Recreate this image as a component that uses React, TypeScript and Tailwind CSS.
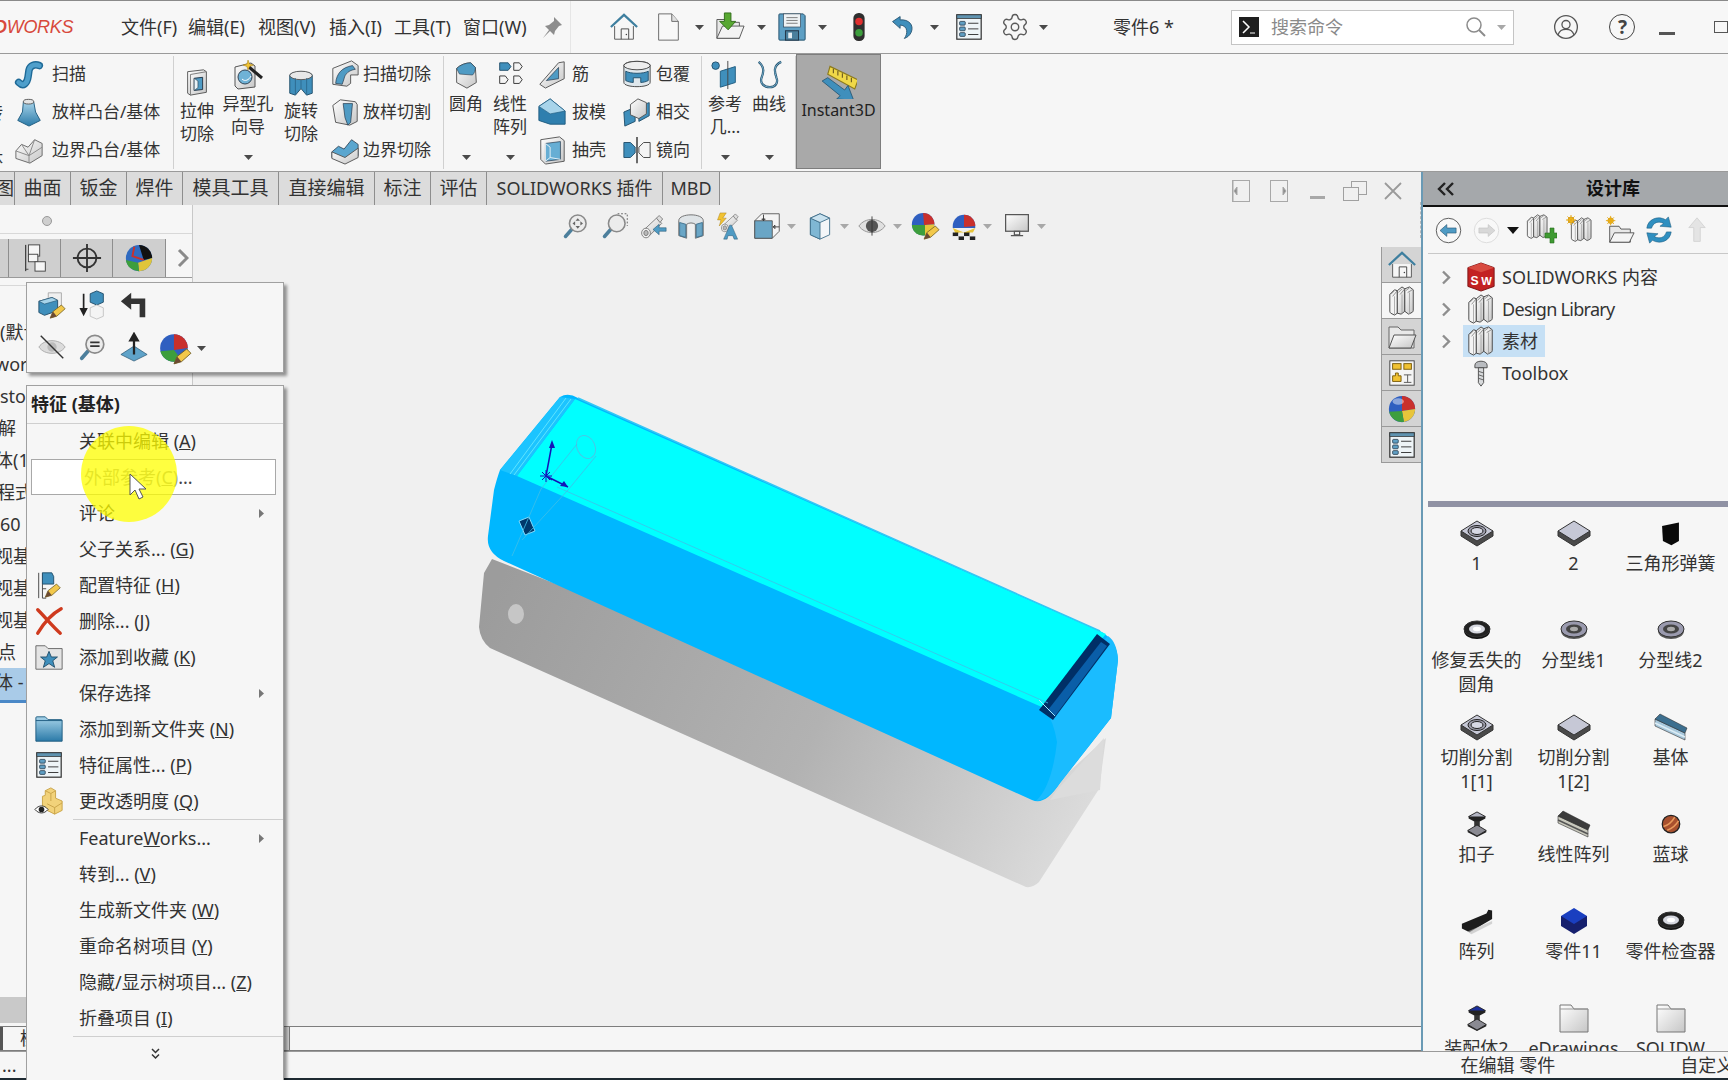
import type { ReactNode } from "react";
import { Settings } from "lucide-react";

type IconProps = { size?: number; children?: ReactNode; box?: string };

const Svg = ({ size = 30, box = "0 0 32 32", children }: IconProps) => (
  <svg width={size} height={size} viewBox={box} className="shrink-0" fill="none">
    {children}
  </svg>
);

const Caret = ({ light = false }: { light?: boolean }) => (
  <svg width="9" height="5" viewBox="0 0 9 5" className="shrink-0">
    <path d="M0 0h9L4.500 5z" fill={light ? "#a8a8a8" : "#4a4a4a"} />
  </svg>
);

const Books = ({ size = 28 }: { size?: number }) => (
  <Svg size={size}>
    <path d="M3 9l5-5 3 1v24l-3 2-4-2q-1-1-1-2z" fill="#f4f4f4" stroke="#444" />
    <path d="M11 5l5-4 3 2v24l-4 3-4-1z" fill="url(#gGray)" stroke="#444" />
    <path d="M19 3l5-2 4 3v22q0 1-1 2l-4 2-4-3z" fill="url(#gGray)" stroke="#444" />
    <path d="M4 9l4-4M6 11l5-6M12 7l4-4M14 9l5-6M20 5l4-3M22 7l5-3" stroke="#777" strokeWidth=".8" />
    <path d="M8 11v20M16 9v21M24 7v23" stroke="#999" strokeWidth=".8" />
  </Svg>
);

const Folder = ({ size = 30, open = false }: { size?: number; open?: boolean }) => (
  <Svg size={size}>
    <path d="M3 27V6h9l3 3h13v18z" fill="#e8e8e8" stroke="#666" />
    {open ? <path d="M3 27l5-13h22l-5 13z" fill="url(#gGray)" stroke="#555" /> : null}
  </Svg>
);

const Sun = ({ x, y }: { x: number; y: number }) => (
  <g>
    <circle cx={x} cy={y} r="3" fill="#f6c11c" stroke="#b07d10" strokeWidth=".6" />
    <path d={`M${x - 5} ${y}h10M${x} ${y - 5}v10M${x - 3.500} ${y - 3.500}l7 7M${x + 3.500} ${y - 3.500}l-7 7`} stroke="#e8a915" />
  </g>
);

const Magnifier = ({ children }: { children?: ReactNode }) => (
  <>
    <path d="M11 20L4 28" stroke="#4c7f9c" strokeWidth="4" strokeLinecap="round" />
    <circle cx="18" cy="13" r="9.500" fill="#ececec" stroke="#8a8a8a" strokeWidth="1.800" />
    {children}
  </>
);

const Spyglass = () => (
  <>
    <path d="M5 21L20 7l6 6-14 14z" fill="url(#gGray)" stroke="#777" />
    <ellipse cx="8" cy="24" rx="5" ry="5.500" fill="#f0f0f0" stroke="#777" />
    <ellipse cx="8" cy="24" rx="2.500" ry="3" fill="#b8b8b8" stroke="#777" />
    <path d="M20 7l3-3 4 4-3 4z" fill="#ddd" stroke="#777" />
  </>
);

const Ball = ({ size = 30 }: { size?: number }) => (
  <Svg size={size}>
    <circle cx="16" cy="16" r="14" fill="#2f5fc0" />
    <path d="M16 2a14 14 0 0 1 14 14L16 18z" fill="#c9302c" />
    <path d="M30 16a14 14 0 0 1-12 13.800L16 18z" fill="#e8c53a" />
    <path d="M18 29.800A14 14 0 0 1 2.300 19L16 18z" fill="#3d9e3d" />
    <ellipse cx="12" cy="8" rx="6" ry="3.500" fill="#fff" opacity=".45" />
  </Svg>
);

const Pencil = ({ x = 0, y = 0 }: { x?: number; y?: number }) => (
  <g transform={`translate(${x} ${y})`}>
    <path d="M0 14l3-7L12 0l4 4-9 8z" fill="#f2c84b" stroke="#6b5a20" strokeWidth=".8" />
    <path d="M0 14l3-7 4 5z" fill="#6b4a33" />
  </g>
);

const ListIcon = ({ size = 30 }: { size?: number }) => (
  <Svg size={size}>
    <rect x="3" y="3" width="26" height="26" fill="#eef4f7" stroke="#333" strokeWidth="1.300" />
    <rect x="3" y="3" width="26" height="4" fill="#5f93b0" stroke="#333" strokeWidth=".8" />
    <rect x="6" y="10" width="6" height="4" rx="1" fill="#5f9fc4" stroke="#234" strokeWidth=".8" />
    <rect x="6" y="16" width="6" height="4" rx="1" fill="#5f9fc4" stroke="#234" strokeWidth=".8" />
    <rect x="6" y="22" width="6" height="4" rx="1" fill="#5f9fc4" stroke="#234" strokeWidth=".8" />
    <path d="M15 12h11M15 18h11M15 24h11" stroke="#333" />
  </Svg>
);

const Home = ({ size = 30 }: { size?: number }) => (
  <Svg size={size}>
    <path d="M2 16L16 3l14 13" stroke="#3e7f9f" strokeWidth="2.400" />
    <path d="M6 15v14h20V15" fill="#f6f6f6" stroke="#555" />
    <path d="M13 29V18h8v11" stroke="#444" />
    <circle cx="18.500" cy="24" r=".8" fill="#444" />
  </Svg>
);

const SweepBoss = () => (
  <Svg>
    <path d="M5 25c5 5 9 1 10-6l1-7c1-5 6-7 11-5" stroke="#1f6a97" strokeWidth="8" strokeLinecap="round" />
    <path d="M5 25c5 5 9 1 10-6l1-7c1-5 6-7 11-5" stroke="#4f9fcb" strokeWidth="5" strokeLinecap="round" />
  </Svg>
);
const LoftBoss = () => (
  <Svg>
    <path d="M10 5h11l2 11 5 9-12 6-12-6 5-9z" fill="url(#gBlue)" stroke="#1f5c80" />
    <ellipse cx="15.500" cy="5" rx="5.500" ry="2.500" fill="#e4e4e4" stroke="#555" />
  </Svg>
);
const BoundaryBoss = () => (
  <Svg>
    <path d="M2 17l6-7 7 3 7-8 8 4v13l-13 8-15-5z" fill="url(#gGray)" stroke="#666" />
    <path d="M2 17l14 5 14-9M16 22v8M8 10l8 12M22 5l-6 17" stroke="#888" />
  </Svg>
);
const CutExtrude = () => (
  <Svg>
    <path d="M6 5l17-2 3 2v22l-17 3-3-2z" fill="url(#gGray)" stroke="#555" />
    <path d="M9 8l17-3M9 8v22" stroke="#777" />
    <path d="M13 12l9-1v13l-9 1z" fill="#4f9bc4" stroke="#234" />
    <path d="M13 12l4 3v7l-4 3z" fill="#e8f2f7" stroke="#234" strokeWidth=".6" />
  </Svg>
);
const HoleWizard = () => (
  <Svg size={32}>
    <path d="M3 8l16-4 4 3v21l-17 2-3-3z" fill="url(#gGray)" stroke="#555" />
    <circle cx="13" cy="18" r="7" fill="#6fb2d6" stroke="#345" />
    <path d="M10 20c3 3 7 1 9-3" stroke="#fff" />
    <path d="M17 8l13 11" stroke="#222" strokeWidth="3" />
    <path d="M16 1l1.500 4 4 1-4 1.500L16 11l-1-3.500-4-1.500 4-1z" fill="#f1c232" stroke="#a57d10" strokeWidth=".5" />
  </Svg>
);
const RevolveCut = () => (
  <Svg>
    <path d="M4 9c0-5 24-5 24 0v19l-6 2-6-7-6 7-6-2z" fill="#3f8fbc" stroke="#23506c" />
    <ellipse cx="16" cy="9" rx="12" ry="4.500" fill="#e8e8e8" stroke="#555" />
    <path d="M10 12v17M16 14v9M22 12v17" stroke="#2d6b90" />
  </Svg>
);
const SweepCut = () => (
  <Svg>
    <path d="M3 10l20-8 7 5v10h-8v9l-4 3-15-2z" fill="url(#gGray)" stroke="#555" />
    <path d="M6 26C7 15 13 9 24 7l3 4c-7 1-11 5-12 10l-2 6z" fill="#4f9bc4" stroke="#234" strokeWidth=".7" />
  </Svg>
);
const LoftCut = () => (
  <Svg>
    <path d="M3 9l8-6 16 2 2 3v18l-8 4-15-3z" fill="url(#gGray)" stroke="#555" />
    <path d="M14 7h10l-2 20-3 3-3-8z" fill="#4f9bc4" stroke="#234" strokeWidth=".7" />
  </Svg>
);
const BoundaryCut = () => (
  <Svg>
    <path d="M2 18l7-6 6 3 8-10 7 5v12l-14 8-14-6z" fill="#5aa6cf" stroke="#234" strokeWidth=".8" />
    <path d="M2 18l14 6 14-10v10l-14 7-14-6z" fill="url(#gGray)" stroke="#555" />
  </Svg>
);
const Fillet = () => (
  <Svg>
    <path d="M6 9c4-4 10-6 15-6l5 5 1 16-10 6-11-6z" fill="url(#gGray)" stroke="#555" />
    <path d="M6 9c4-4 10-6 15-6l5 5c0 3-1 6-3 8L9 15z" fill="#4f9bc4" stroke="#234" strokeWidth=".6" />
  </Svg>
);
const LinearPat = () => (
  <Svg>
    <path d="M5 3h9l3 4-3 4H5z" fill="#3f8fbc" stroke="#23506c" />
    <path d="M20 3h6l3 4-3 4h-6zM5 17h6l3 4-3 4H5zM20 17h6l3 4-3 4h-6z" fill="#f4f4f4" stroke="#333" />
  </Svg>
);
const Rib = () => (
  <Svg>
    <path d="M3 27L23 4l6-1v18L9 31z" fill="url(#gGray)" stroke="#555" />
    <path d="M10 23L23 9v12z" fill="#4f9bc4" stroke="#234" strokeWidth=".7" />
  </Svg>
);
const Draft = () => (
  <Svg>
    <path d="M2 10l12-8 16 13v14H14l-12-4z" fill="#2f7fae" stroke="#1f5c80" />
    <path d="M2 10l12-8 16 13-16 3z" fill="#a8d4ea" stroke="#1f5c80" strokeWidth=".7" />
  </Svg>
);
const Shell = () => (
  <Svg>
    <path d="M4 5l20-3 5 4v22l-20 3-5-5z" fill="url(#gGray)" stroke="#555" />
    <path d="M9 9l16-2v19l-16 2z" fill="#66aed4" stroke="#234" strokeWidth=".7" />
    <path d="M9 9l5 4v11l-5 4zM14 24l11 2" stroke="#e8f2f7" />
  </Svg>
);
const Wrap = () => (
  <Svg>
    <path d="M2 7c0-6 28-6 28 0v18c0 6-28 6-28 0z" fill="#dfe7ec" stroke="#444" />
    <ellipse cx="16" cy="7" rx="14" ry="4.500" fill="#eee" stroke="#444" />
    <path d="M4 13c5 3 19 3 24 0v10c-2 1-5 2-8 2v-5h-8v5c-3 0-6-1-8-2z" fill="#3f8fbc" stroke="#23506c" />
  </Svg>
);
const Intersect = () => (
  <Svg>
    <path d="M2 16l12-5v15L3 31z" fill="#3f8fbc" stroke="#23506c" />
    <path d="M18 10l11-4v14l-11 6z" fill="#3f8fbc" stroke="#23506c" />
    <path d="M9 8l8-6 9 4v12l-8 5-9-4z" fill="url(#gGray)" stroke="#555" />
  </Svg>
);
const Mirror = () => (
  <Svg>
    <path d="M2 8h7l5 5v6l-5 5H2z" fill="#3f8fbc" stroke="#23506c" />
    <path d="M30 8h-7l-5 5v6l5 5h7z" fill="#f4f4f4" stroke="#444" />
    <path d="M16 2v28" stroke="#222" strokeWidth="1.400" />
  </Svg>
);
const RefGeom = () => (
  <Svg>
    <circle cx="6" cy="6" r="4" fill="#3f8fbc" stroke="#23506c" />
    <path d="M11 12l16-5v17l-16 5z" fill="#3f8fbc" stroke="#1f5c80" />
    <path d="M19 1v30" stroke="#444" />
  </Svg>
);
const Curves = () => (
  <Svg>
    <path d="M5 2c7 6 5 12 3 17-2 6 3 10 9 10s9-5 7-10c-2-6-4-13 5-17" stroke="#23506c" strokeWidth="2.400" />
    <path d="M5 2c7 6 5 12 3 17-2 6 3 10 9 10s9-5 7-10c-2-6-4-13 5-17" stroke="#7fb7d4" strokeWidth="1" />
  </Svg>
);
const Instant3D = () => (
  <Svg size={36}>
    <path d="M8 3l25 12-3 8L6 10z" fill="#f0d848" stroke="#8c7a1e" />
    <path d="M11 5v4M15 7v4M19 9v4M23 11v4M27 13v4" stroke="#6b5a20" />
    <path d="M1 16l5-3 15 11 3-4 5 13-15-1 3-3z" fill="#3f8fbc" stroke="#23506c" strokeWidth=".7" />
  </Svg>
);

const RibbonRow = ({ icon, label, iconW }: { icon: ReactNode; label: string; iconW: string }) => (
  <div className="flex h-[38px] items-center">
    <div className={`flex justify-center ${iconW}`}>{icon}</div>
    <span className="whitespace-nowrap">{label}</span>
  </div>
);

const BigBtn = ({
  icon,
  lines,
  width,
  top,
  caret = true,
}: {
  icon: ReactNode;
  lines: string[];
  width: string;
  top: string;
  caret?: boolean;
}) => (
  <div className={`flex flex-col items-center ${width} ${top}`}>
    <div className="flex h-[34px] items-center justify-center">{icon}</div>
    {lines.map((l) => (
      <div key={l} className="whitespace-nowrap text-center leading-[23px]">
        {l}
      </div>
    ))}
    {caret ? (
      <div className="mt-auto pb-[11px]">
        <Caret />
      </div>
    ) : null}
  </div>
);

const RibbonSep = () => <div className="my-[2px] w-px shrink-0 bg-[#d0d0d0]" />;

const Ribbon = () => (
  <div className="flex h-[118px] shrink-0 border-b border-[#9a9a9a] bg-[#f6f6f6] text-[17px]">
    <div className="flex w-[6px] shrink-0 flex-col overflow-hidden pt-[47px] leading-[23px]">
      <div className="ml-[-14px]">转</div>
      <div className="ml-[-7px]">/</div>
      <div className="ml-[-14px]">体</div>
    </div>
    <div className="w-[167px] shrink-0 pt-px">
      <RibbonRow icon={<SweepBoss />} label="扫描" iconW="w-[46px]" />
      <RibbonRow icon={<LoftBoss />} label="放样凸台/基体" iconW="w-[46px]" />
      <RibbonRow icon={<BoundaryBoss />} label="边界凸台/基体" iconW="w-[46px]" />
    </div>
    <RibbonSep />
    <BigBtn icon={<CutExtrude />} lines={["拉伸", "切除"]} width="w-[46px]" top="pt-[11px]" caret={false} />
    <BigBtn icon={<HoleWizard />} lines={["异型孔", "向导"]} width="w-[56px]" top="pt-[4px]" />
    <BigBtn icon={<RevolveCut />} lines={["旋转", "切除"]} width="w-[50px]" top="pt-[11px]" caret={false} />
    <div className="w-[117px] shrink-0 pt-px">
      <RibbonRow icon={<SweepCut />} label="扫描切除" iconW="w-[37px]" />
      <RibbonRow icon={<LoftCut />} label="放样切割" iconW="w-[37px]" />
      <RibbonRow icon={<BoundaryCut />} label="边界切除" iconW="w-[37px]" />
    </div>
    <RibbonSep />
    <BigBtn icon={<Fillet />} lines={["圆角"]} width="w-[44px]" top="pt-[4px]" />
    <BigBtn icon={<LinearPat />} lines={["线性", "阵列"]} width="w-[44px]" top="pt-[4px]" />
    <div className="w-[85px] shrink-0 pt-px">
      <RibbonRow icon={<Rib />} label="筋" iconW="w-[40px]" />
      <RibbonRow icon={<Draft />} label="拔模" iconW="w-[40px]" />
      <RibbonRow icon={<Shell />} label="抽壳" iconW="w-[40px]" />
    </div>
    <div className="w-[84px] shrink-0 pt-px">
      <RibbonRow icon={<Wrap />} label="包覆" iconW="w-[39px]" />
      <RibbonRow icon={<Intersect />} label="相交" iconW="w-[39px]" />
      <RibbonRow icon={<Mirror />} label="镜向" iconW="w-[39px]" />
    </div>
    <RibbonSep />
    <BigBtn icon={<RefGeom />} lines={["参考", "几..."]} width="w-[46px]" top="pt-[4px]" />
    <BigBtn icon={<Curves />} lines={["曲线"]} width="w-[42px]" top="pt-[4px]" />
    <div className="ml-[5px] my-[2px] w-px bg-[#d0d0d0]" />
    <div className="mb-[2px] flex w-[85px] shrink-0 flex-col items-center border border-[#7d7d7d] bg-[#a9a9a9] pt-[8px] text-[#222]">
      <Instant3D />
      <div className="mt-[-1px] text-[16px] leading-[24px]">Instant3D</div>
    </div>
  </div>
);

const menus = [
  { t: "文件(F)", w: "w-[67px]" },
  { t: "编辑(E)", w: "w-[70px]" },
  { t: "视图(V)", w: "w-[71px]" },
  { t: "插入(I)", w: "w-[65px]" },
  { t: "工具(T)", w: "w-[69px]" },
  { t: "窗口(W)", w: "w-[70px]" },
];

const TitleBar = () => (
  <div className="flex h-[53px] shrink-0 items-center border-b border-[#9a9a9a] bg-[#f7f7f7]">
    <div className="w-[121px] shrink-0 overflow-hidden text-[#d8493c]">
      <div className="ml-[-6px] font-['Liberation_Sans'] text-[18px] italic leading-none tracking-[-0.3px]">
        <span className="font-bold">D</span>WORKS
      </div>
    </div>
    <div className="flex h-full w-[450px] shrink-0 items-center border-r border-[#e6e6e6]">
      {menus.map((m) => (
        <div key={m.t} className={`shrink-0 whitespace-nowrap ${m.w}`}>
          {m.t}
        </div>
      ))}
      <div className="ml-[7px]">
        <Svg size={24} box="0 0 24 24">
          <path d="M14 2l8 8-3 1-4 5-1 4-4-4-7 7 6-8-4-4 4-1 5-4z" fill="#8d8d8d" />
        </Svg>
      </div>
    </div>
    <div className="flex items-center pl-[28px]">
      <div className="flex w-[50px] justify-center"><Home /></div>
      <div className="flex w-[38px] justify-center">
        <Svg>
          <path d="M6 2h14l7 8v20H6z" fill="#f8f8f8" stroke="#666" />
          <path d="M20 2v8h7" fill="#e0e0e0" stroke="#666" />
        </Svg>
      </div>
      <div className="flex w-[24px] justify-center"><Caret /></div>
      <div className="flex w-[38px] justify-center">
        <Svg>
          <path d="M2 28V8h10l2 3h12v17z" fill="#e8e8e8" stroke="#555" />
          <path d="M2 28l6-13h23l-5 13z" fill="#f3f3f3" stroke="#555" />
          <path d="M10 1h7v9h5l-8 9-9-9h5z" fill="#58a832" stroke="#2f6b18" />
        </Svg>
      </div>
      <div className="flex w-[25px] justify-center"><Caret /></div>
      <div className="flex w-[36px] justify-center">
        <Svg>
          <path d="M2 3q0-1 1-1h25l2 2v25q0 1-1 1H3q-1 0-1-1z" fill="#5d9fc4" stroke="#23506c" />
          <rect x="7" y="2" width="18" height="14" fill="#eef2f4" stroke="#345" strokeWidth=".7" />
          <path d="M10 6h12M10 9h12M10 12h12" stroke="#777" />
          <rect x="9" y="20" width="14" height="10" fill="#4a7f9c" stroke="#234" />
          <rect x="12" y="22" width="4" height="6" fill="#e4edf2" />
        </Svg>
      </div>
      <div className="flex w-[25px] justify-center"><Caret /></div>
      <div className="ml-[2px] flex w-[44px] justify-center">
        <Svg>
          <rect x="10" y="1" width="12" height="30" rx="5.500" fill="#2f2f2f" />
          <circle cx="16" cy="10" r="4" fill="#e02f2f" />
          <circle cx="16" cy="22" r="4" fill="#3d9e3d" />
        </Svg>
      </div>
      <div className="flex w-[45px] justify-center">
        <Svg size={27}>
          <path d="M3 9l9-6v4c10-1 17 6 13 15-2 4-5 6-8 7 4-5 5-15-5-16v4z" fill="#3f8fbc" stroke="#23506c" />
        </Svg>
      </div>
      <div className="flex w-[16px] justify-center"><Caret /></div>
      <div className="flex w-[54px] justify-center"><ListIcon /></div>
      <div className="flex w-[37px] justify-center">
        <Settings size={30} strokeWidth={1.1} color="#5a5a5a" />
      </div>
      <div className="flex w-[21px] justify-center"><Caret /></div>
    </div>
    <div className="ml-[59px] w-[118px] shrink-0 whitespace-nowrap">零件6 *</div>
    <div className="flex h-[35px] w-[283px] shrink-0 items-center border border-[#c4c4c4] bg-white pl-[7px] pr-[7px]">
      <div className="flex h-[20px] w-[20px] items-center justify-center bg-[#1f1f1f]">
        <svg width="18" height="18" viewBox="0 0 18 18" fill="none">
          <path d="M3 3l6 6-6 6" stroke="#fff" strokeWidth="1.500" />
          <path d="M10 15h5" stroke="#fff" />
        </svg>
      </div>
      <span className="ml-[12px] text-[#8a8a8a]">搜索命令</span>
      <svg width="22" height="22" viewBox="0 0 22 22" fill="none" className="ml-auto">
        <circle cx="9" cy="9" r="7" stroke="#8c8c8c" strokeWidth="1.500" />
        <path d="M14 14l6 6" stroke="#8c8c8c" strokeWidth="2" />
      </svg>
      <div className="ml-[10px]"><Caret light /></div>
    </div>
    <div className="ml-[32px] flex w-[40px] justify-center">
      <Svg size={26}>
        <circle cx="16" cy="16" r="14" stroke="#555" strokeWidth="1.600" />
        <circle cx="16" cy="13" r="5" stroke="#555" strokeWidth="1.600" />
        <path d="M6 26c2-6 5-7 10-7s8 1 10 7" stroke="#555" strokeWidth="1.600" />
      </Svg>
    </div>
    <div className="ml-[17px] flex h-[26px] w-[40px] items-center justify-center">
      <div className="flex h-[26px] w-[26px] items-center justify-center rounded-full border-[1.500px] border-[#444] text-[19px] font-bold leading-none text-[#444]">
        ?
      </div>
    </div>
    <div className="ml-[17px] mt-[12px] h-[3px] w-[16px] bg-[#555]" />
    <div className="ml-[39px] h-[12px] w-[14px] border border-[#555]" />
  </div>
);

const tabs = [
  { t: "曲面", c: "w-[56px] text-[19px]" },
  { t: "钣金", c: "w-[56px] text-[19px]" },
  { t: "焊件", c: "w-[56px] text-[19px]" },
  { t: "模具工具", c: "w-[96px] text-[19px]" },
  { t: "直接编辑", c: "w-[96px] text-[19px]" },
  { t: "标注", c: "w-[56px] text-[19px]" },
  { t: "评估", c: "w-[56px] text-[19px]" },
  { t: "SOLIDWORKS 插件", c: "w-[176px]" },
  { t: "MBD", c: "w-[57px]" },
];

const WinBtn = ({ children, w }: { children: ReactNode; w: string }) => (
  <div className={`flex justify-center ${w}`}>{children}</div>
);

const TabsRow = () => (
  <div className="flex h-[33px] shrink-0 items-stretch bg-[#f0f0f0]">
    <div className="w-[15px] overflow-hidden border-r border-[#8e8e8e] bg-[#dcdcdc] leading-[33px]">
      <div className="ml-[-4px]">图</div>
    </div>
    {tabs.map((t) => (
      <div key={t.t} className={`flex items-center justify-center whitespace-nowrap border-r border-[#8e8e8e] bg-[#dcdcdc] ${t.c}`}>
        {t.t}
      </div>
    ))}
    <div className="ml-auto flex items-center pr-[9px] pt-[4px]">
      <WinBtn w="w-[38px]">
        <svg width="18" height="22" viewBox="0 0 18 22" fill="none">
          <rect x=".5" y=".5" width="17" height="21" stroke="#a8a8a8" />
          <path d="M1 .5v21M5 7l-3 4 3 4z" fill="#8d8d8d" stroke="#a8a8a8" />
        </svg>
      </WinBtn>
      <WinBtn w="w-[38px]">
        <svg width="18" height="22" viewBox="0 0 18 22" fill="none">
          <rect x=".5" y=".5" width="17" height="21" stroke="#a8a8a8" />
          <path d="M13 7l3 4-3 4z" fill="#8d8d8d" stroke="#a8a8a8" />
        </svg>
      </WinBtn>
      <WinBtn w="w-[38px]">
        <div className="mt-[14px] h-[3px] w-[15px] bg-[#a8a8a8]" />
      </WinBtn>
      <WinBtn w="w-[38px]">
        <svg width="24" height="20" viewBox="0 0 24 20" fill="none">
          <rect x="8.500" y=".5" width="15" height="13" stroke="#a0a0a0" />
          <rect x=".5" y="6.500" width="15" height="13" fill="#f0f0f0" stroke="#a0a0a0" />
        </svg>
      </WinBtn>
      <WinBtn w="w-[38px]">
        <svg width="18" height="18" viewBox="0 0 18 18" fill="none">
          <path d="M1 1l16 16M17 1L1 17" stroke="#9a9a9a" strokeWidth="1.800" />
        </svg>
      </WinBtn>
    </div>
  </div>
);

const treeRows = [
  { t: "(默认", c: "" },
  { t: "works", c: "ml-[-5px]" },
  { t: "stom", c: "" },
  { t: "解", c: "ml-[-2px]" },
  { t: "体(1", c: "ml-[-5px]" },
  { t: "程式", c: "ml-[-3px]" },
  { t: "60", c: "" },
  { t: "视基", c: "ml-[-5px]" },
  { t: "视基", c: "ml-[-5px]" },
  { t: "视基", c: "ml-[-5px]" },
  { t: "点", c: "ml-[-2px]" },
];

const LeftPanel = () => (
  <div className="flex w-[193px] shrink-0 flex-col border-r border-[#c8c8c8] bg-[#f6f6f6]">
    <div className="flex h-[29px] items-center justify-center border-b border-[#d8d8d8] pr-[98px] pt-[4px]">
      <div className="h-[10px] w-[10px] rounded-full border border-[#999] bg-[#cfcfcf]" />
    </div>
    <div className="mt-[5px] flex h-[38px] items-stretch">
      <div className="w-[9px] border-r border-[#8e8e8e] bg-[#cfcfcf]" />
      <div className="flex w-[52px] items-center justify-center border-r border-[#8e8e8e] bg-[#cfcfcf]">
        <Svg size={30}>
          <path d="M6 2v28" stroke="#444" strokeWidth="1.400" />
          <rect x="9" y="2" width="12" height="12" fill="#f6f6f6" stroke="#444" />
          <rect x="9" y="12" width="10" height="8" fill="#f6f6f6" stroke="#444" />
          <rect x="16" y="20" width="11" height="10" fill="#f6f6f6" stroke="#444" />
          <path d="M6 28h3" stroke="#444" />
        </Svg>
      </div>
      <div className="flex w-[52px] items-center justify-center border-r border-[#8e8e8e] bg-[#cfcfcf]">
        <Svg size={30}>
          <circle cx="16" cy="16" r="10" stroke="#333" strokeWidth="2" />
          <path d="M16 1v30M1 16h30" stroke="#333" strokeWidth="2" />
        </Svg>
      </div>
      <div className="flex w-[53px] items-center justify-center border-r border-[#8e8e8e] bg-[#cfcfcf]">
        <Svg size={30}>
          <circle cx="16" cy="16" r="14" fill="#2f6ac0" />
          <path d="M16 2a14 14 0 0 1 14 14l-9 2z" fill="#111" />
          <path d="M30 16a14 14 0 0 1-14 14l-1-9z" fill="#e0c53a" />
          <path d="M16 30A14 14 0 0 1 2 18l13 3z" fill="#3d9e3d" />
          <path d="M11 4l-2 10 12 4" stroke="#c9302c" strokeWidth="2" />
        </Svg>
      </div>
      <div className="flex flex-1 items-center justify-center pl-[8px]">
        <svg width="12" height="20" viewBox="0 0 12 20" fill="none">
          <path d="M2 2l8 8-8 8" stroke="#8a8a8a" strokeWidth="3" />
        </svg>
      </div>
    </div>
    <div className="h-[9px] border-t border-[#9a9a9a] border-b border-b-[#d8d8d8]" />
    <div className="pt-[30px]">
      {treeRows.map((r) => (
        <div key={r.t + r.c} className="flex h-[32px] items-center overflow-hidden whitespace-nowrap">
          <span className={r.c}>{r.t}</span>
        </div>
      ))}
      <div className="flex h-[35px] items-center overflow-hidden whitespace-nowrap border-b-[3px] border-[#4a88c7] bg-[#a9cbe8] pb-[3px]">
        <span className="ml-[-5px]">体 - 基体</span>
      </div>
    </div>
    <div className="mt-auto h-[26px] bg-[#c9c9c9]" />
    <div className="h-[3px]" />
  </div>
);

const HeadsUp = () => (
  <div className="flex h-[42px] items-center pl-[369px]">
    <div className="w-[28px]">
      <Svg size={28}><Magnifier><path d="M18 7l2.500 3h-5zM18 19l2.500-3h-5zM12 13l3-2.500v5zM24 13l-3-2.500v5z" fill="#666" /></Magnifier></Svg>
    </div>
    <div className="ml-[11px] w-[28px]">
      <Svg size={28}>
        <Magnifier />
        <path d="M19 2h11v14" stroke="#555" strokeDasharray="2 2" />
      </Svg>
    </div>
    <div className="ml-[10px] w-[28px]">
      <Svg size={28}>
        <Spyglass />
        <path d="M31 18h-8v-4l-7 6 7 6v-4h8z" fill="#4f9bc4" stroke="#23506c" strokeWidth=".6" />
      </Svg>
    </div>
    <div className="ml-[10px] w-[28px]">
      <Svg size={28}>
        <path d="M2 10c0-9 28-9 28 0v17l-9 3V14c-3-2-7-2-10 0v16l-9-3z" fill="#dfe4e7" stroke="#666" />
        <path d="M3 12l7 2v15l-7-2zM29 12l-7 2v15l7-2z" fill="#6aa6c6" stroke="#3c6c88" />
      </Svg>
    </div>
    <div className="ml-[9px] w-[28px]">
      <Svg size={28}>
        <g transform="translate(6 -1) scale(.8)"><Spyglass /></g>
        <path d="M7 1h7l-4 6h4l-8 9 2-7H4z" fill="#f1c232" stroke="#a57d10" strokeWidth=".5" />
        <path d="M11 31l7-16h2l7 16h-4l-1.500-4h-5.500L15 31z" fill="#4f9bc4" stroke="#23506c" strokeWidth=".5" />
      </Svg>
    </div>
    <div className="ml-[11px] w-[28px]">
      <Svg size={28}>
        <path d="M2 10l8-8h20v20l-8 8H2z" fill="#f4f4f4" stroke="#555" />
        <path d="M2 10h20v20H2z" fill="#6aa6c6" stroke="#555" />
        <path d="M12 3v7l-2-2h4l-2 2M30 17h-7l2-2v4l-2-2" stroke="#333" />
      </Svg>
    </div>
    <div className="ml-[6px]"><Caret light /></div>
    <div className="ml-[10px] w-[28px]">
      <Svg size={28}>
        <path d="M5 7l11-5 11 5v19l-11 5-11-5z" fill="#f3f6f8" stroke="#3c6c88" />
        <path d="M5 7l11 5v19l-11-5z" fill="#7fb7d4" stroke="#3c6c88" />
        <path d="M5 7l11-5 11 5-11 5z" fill="#c9e2ef" stroke="#3c6c88" />
      </Svg>
    </div>
    <div className="ml-[6px]"><Caret light /></div>
    <div className="ml-[9px] w-[28px]">
      <Svg size={28}>
        <path d="M1 16C8 6 24 6 31 16 24 26 8 26 1 16z" fill="#e0e0e0" stroke="#8a8a8a" />
        <circle cx="16" cy="16" r="7" fill="#555" />
        <path d="M16 5v22" stroke="#333" />
      </Svg>
    </div>
    <div className="ml-[7px]"><Caret light /></div>
    <div className="ml-[8px] w-[30px]">
      <Svg size={30}>
        <circle cx="14" cy="14" r="12" fill="#2f5fc0" />
        <path d="M14 2a12 12 0 0 1 12 12l-11 1z" fill="#c9302c" />
        <path d="M2 15a12 12 0 0 0 14 11v-11z" fill="#3d9e3d" />
        <path d="M26 14a12 12 0 0 1-10 12v-11z" fill="#e8c53a" />
        <Pencil x={15} y={16} />
      </Svg>
    </div>
    <div className="ml-[9px] w-[30px]">
      <Svg size={30}>
        <path d="M4 16a12 12 0 0 1 24 0v2H4z" fill="#2f5fc0" />
        <path d="M16 4a12 12 0 0 1 12 12l-12 1z" fill="#c9302c" />
        <path d="M4 18l12 5 12-5-3 6H7z" fill="#e8c53a" />
        <path d="M4 23h6v4H4zm12 0h6v4h-6zm-6 4h6v4h-6zm12 0h6v4h-6z" fill="#222" />
        <path d="M10 23h6v4h-6zm12 0h6v4h-6zM4 27h6v4H4zm12 0h6v4h-6z" fill="#eee" />
      </Svg>
    </div>
    <div className="ml-[4px]"><Caret light /></div>
    <div className="ml-[11px] w-[28px]">
      <Svg size={28}>
        <rect x="3" y="3" width="26" height="19" fill="url(#gGray)" stroke="#555" strokeWidth="1.400" />
        <path d="M13 22h6v4h-6zM9 27h14" stroke="#555" strokeWidth="1.400" />
      </Svg>
    </div>
    <div className="ml-[6px]"><Caret light /></div>
  </div>
);

const Model = () => (
  <svg
    viewBox="470 390 680 520"
    className="absolute left-[277px] top-[185px] h-[520px] w-[680px]"
    fill="none"
  >
    <defs>
      <linearGradient id="gShadow" gradientUnits="userSpaceOnUse" x1="500" y1="580" x2="1070" y2="860">
        <stop offset="0" stopColor="#9c9c9c" />
        <stop offset=".55" stopColor="#b2b2b2" />
        <stop offset="1" stopColor="#dcdcdc" />
      </linearGradient>
    </defs>
    <path
      d="M492 559L484 573 479 627Q480 640 490 648L1026 887Q1033 888 1039 882L1099 789 1106 738 1060 780 492 559Z"
      fill="url(#gShadow)"
    />
    <path d="M1057 790L1104 738 1100 790 1050 800z" fill="#dcdcdc" />
    <ellipse cx="516" cy="614" rx="8" ry="10" fill="#c6c6c6" />
    <path
      d="M560 397Q568 392 578 398L1100 631Q1117 640 1118 660L1111 718 1060 783Q1045 806 1032 800L504 561Q486 552 488 536L494 490Q497 478 500 470z"
      fill="#00b7ff"
    />
    <path d="M1108 636Q1117 642 1118 660L1111 718 1060 783Q1048 800 1036 801 1052 786 1057 742 1054 722 1044 708z" fill="#1abcff" />
    <path d="M575 399L1106 634 1044 708 517 476z" fill="#00ffff" />
    <path d="M560 397L575 399 517 476 500 470z" fill="#1cc4ff" />
    <path d="M566 398L510 474M571 399L514 475" stroke="#5fe4ff" strokeWidth="1" />
    <path d="M578 398L1100 631" stroke="#33c8f5" strokeWidth="1.500" />
    <path d="M1097 634L1110 644 1053 720 1039 710z" fill="#002f66" />
    <path d="M1101 642L1107 646 1055 716 1048 710z" fill="#0a5ea8" />
    <path d="M1039 700L1055 716" stroke="#9fe8ff" />
    <path d="M519 521L529 517 535 531 525 535z" fill="#00386b" stroke="#7fdcff" />
    <ellipse cx="586" cy="447" rx="9" ry="12" transform="rotate(-25 586 447)" stroke="#46c9e6" />
    <path d="M577 444L541 489M596 456L568 490 522 540M557 487L1048 703M541 489L512 556" stroke="#3fbfe8" strokeWidth=".8" />
    <path d="M552 444L546 476M546 476L568 487M546 476L552 480" stroke="#1414b8" strokeWidth="1.500" />
    <path d="M552 440l-3 8h6zM568 487l-8-1 4-5z" fill="#1414b8" />
    <path d="M540 476h12M546 470v12M542 472l8 8M550 472l-8 8" stroke="#1414b8" />
  </svg>
);

const DocTabs = () => (
  <div className="absolute left-[1188px] top-[42px] flex flex-col">
    {[
      { n: "h", on: false, i: <Home size={30} /> },
      { n: "b", on: true, i: <Books size={30} /> },
      { n: "f", on: false, i: <Folder size={32} open /> },
      {
        n: "p",
        on: false,
        i: (
          <Svg size={30}>
            <rect x="3" y="3" width="26" height="26" fill="#f4f4f4" stroke="#444" />
            <rect x="6" y="6" width="9" height="6" fill="#f1c232" stroke="#7a5c0a" />
            <rect x="18" y="6" width="8" height="6" fill="#f1c232" stroke="#7a5c0a" />
            <path d="M6 25v-6h3v-3h3v3h3v6z" fill="#f1c232" stroke="#7a5c0a" />
            <path d="M18 18h8M22 18v8M18 26h8" stroke="#555" />
          </Svg>
        ),
      },
      { n: "c", on: false, i: <Ball size={30} /> },
      { n: "l", on: false, i: <ListIcon size={30} /> },
    ].map((t) => (
      <div
        key={t.n}
        className={`flex h-[36px] w-[40px] items-center justify-center border-b border-l border-[#9a9a9a] ${
          t.on ? "border-r-0 bg-[#f6f6f6]" : "bg-[#d4d4d4]"
        }`}
      >
        {t.i}
      </div>
    ))}
  </div>
);

const Viewport = () => (
  <div className="relative flex-1 bg-[#f0f0f0]">
    <HeadsUp />
    <Model />
    <DocTabs />
    <div className="absolute right-0 top-[-3px] h-[36px] border-r border-dashed border-[#b8b8b8]" />
  </div>
);

const Plate = ({ ring = false }: { ring?: boolean }) => (
  <Svg size={36} box="0 0 36 28">
    <path d="M2 12v5l16 10 16-10v-5z" fill="#4a4a4a" stroke="#333" />
    <path d="M18 2l16 10-16 10L2 12z" fill="#c6c8d6" stroke="#333" />
    {ring ? (
      <g>
        <ellipse cx="18" cy="12" rx="9" ry="5.500" fill="#9a9aa8" stroke="#222" />
        <ellipse cx="18" cy="12" rx="6" ry="3.500" fill="#d6d8e4" stroke="#222" />
      </g>
    ) : null}
  </Svg>
);
const Disc = ({ dark = false }: { dark?: boolean }) => (
  <Svg size={30} box="0 0 30 24">
    <ellipse cx="15" cy="13" rx="13" ry="8" fill={dark ? "#111" : "#555"} />
    <ellipse cx="15" cy="11" rx="13" ry="8" fill={dark ? "#222" : "#9a9aae"} stroke="#333" />
    <ellipse cx="15" cy="11" rx="8" ry="4.500" fill={dark ? "#d6d8e0" : "#444"} />
    <ellipse cx="15" cy="11" rx="4" ry="2.200" fill={dark ? "#fff" : "#aaa"} />
  </Svg>
);
const Bar = ({ dark = false }: { dark?: boolean }) => (
  <Svg size={36} box="0 0 36 28">
    <path d="M2 6l30 14v7L2 13z" fill={dark ? "#c8c8bc" : "#a8c8dc"} stroke="#333" strokeWidth=".6" />
    <path d="M2 6l5-5 27 14-2 5z" fill={dark ? "#3c3c3c" : "#3c6f8f"} stroke="#222" strokeWidth=".5" />
    <path d="M2 10l30 14" stroke={dark ? "#555" : "#dcecf5"} strokeWidth="1.500" />
  </Svg>
);
const Post = ({ color }: { color: string }) => (
  <Svg size={26} box="0 0 26 28">
    <path d="M13 1l9 5-9 5-9-5z" fill={color} stroke="#222" />
    <path d="M4 6v2l9 5 9-5V6z" fill="#222" />
    <rect x="10" y="11" width="6" height="7" fill="#333" />
    <path d="M13 15l10 6-10 6-10-6z" fill="#8a8a92" stroke="#222" />
    <path d="M3 21v2l10 5 10-5v-2l-10 6z" fill="#222" />
  </Svg>
);
const FolderThumb = () => (
  <Svg size={32} box="0 0 32 32">
    <path d="M2 30V3h11l3 4h14v23z" fill="url(#gGray)" stroke="#777" />
    <path d="M2 7h28" stroke="#999" />
  </Svg>
);

const items: { n: string[]; i: ReactNode }[] = [
  { n: ["1"], i: <Plate ring /> },
  { n: ["2"], i: <Plate /> },
  {
    n: ["三角形弹簧"],
    i: (
      <Svg size={27}>
        <path d="M6 7l20-4v22l-9 5-10-5z" fill="#0a0a0a" />
      </Svg>
    ),
  },
  { n: ["修复丢失的", "圆角"], i: <Disc dark /> },
  { n: ["分型线1"], i: <Disc /> },
  { n: ["分型线2"], i: <Disc /> },
  { n: ["切削分割", "1[1]"], i: <Plate ring /> },
  { n: ["切削分割", "1[2]"], i: <Plate /> },
  { n: ["基体"], i: <Bar /> },
  { n: ["扣子"], i: <Post color="#b4b6c4" /> },
  { n: ["线性阵列"], i: <Bar dark /> },
  {
    n: ["蓝球"],
    i: (
      <Svg size={20}>
        <circle cx="16" cy="16" r="14" fill="#a8502e" stroke="#222" strokeWidth="2" />
        <path d="M4 20c8-2 14-8 18-15M10 26c8-3 14-8 18-15" stroke="#e89a5c" strokeWidth="2.500" />
      </Svg>
    ),
  },
  {
    n: ["阵列"],
    i: (
      <Svg size={34} box="0 0 36 28">
        <path d="M2 17l26-11 2-4 4 1v9L10 26 2 22z" fill="#1c1c1c" />
        <path d="M8 25l26-11v3L12 28z" fill="#bbb" opacity=".6" />
      </Svg>
    ),
  },
  {
    n: ["零件11"],
    i: (
      <Svg size={30} box="0 0 30 28">
        <path d="M2 9v10l13 8 13-8V9z" fill="#16206e" />
        <path d="M15 1l13 8-13 8L2 9z" fill="#1a3fc0" />
      </Svg>
    ),
  },
  { n: ["零件检查器"], i: <Disc dark /> },
  { n: ["装配体2"], i: <Post color="#1b2f9c" /> },
  { n: ["eDrawings"], i: <FolderThumb /> },
  { n: ["SOLIDW"], i: <FolderThumb /> },
];

const tree = [
  {
    t: "SOLIDWORKS 内容",
    c: "",
    caret: true,
    i: (
      <Svg size={30}>
        <path d="M16 1l14 5v20l-14 5-14-5V6z" fill="#c32222" stroke="#7c1414" />
        <path d="M2 6l14 5 14-5-14-5z" fill="#d84a40" />
        <text x="9" y="24" textAnchor="middle" fontSize="13" fontWeight="700" fill="#fff" fontFamily="Liberation Sans">
          S
        </text>
        <text x="22" y="24" textAnchor="middle" fontSize="12" fontWeight="700" fill="#fff" fontFamily="Liberation Sans">
          W
        </text>
      </Svg>
    ),
  },
  { t: "Design Library", c: "tracking-[-0.7px]", caret: true, i: <Books size={30} /> },
  { t: "素材", c: "", caret: true, on: true, i: <Books size={30} /> },
  {
    t: "Toolbox",
    c: "",
    caret: false,
    i: (
      <Svg size={28}>
        <path d="M9 7c0-6 14-6 14 0v3H9z" fill="#b9bcc0" stroke="#444" />
        <path d="M13 10h6v17l-3 4-3-4z" fill="#d8dadc" stroke="#444" />
        <path d="M13 14l6 2M13 18l6 2M13 22l6 2" stroke="#555" />
      </Svg>
    ),
  },
];

const RightPanel = () => (
  <div className="flex w-[307px] shrink-0 flex-col overflow-hidden border-l-2 border-[#6a9ab5] bg-[#f6f6f6]">
    <div className="flex h-[35px] shrink-0 items-center border-b-2 border-[#111] bg-[#a5a8ab]">
      <svg width="18" height="14" viewBox="0 0 18 14" fill="none" className="ml-[14px]">
        <path d="M8 1L2 7l6 6M16 1l-6 6 6 6" stroke="#222" strokeWidth="2.400" />
      </svg>
      <div className="ml-[131px] font-bold text-[#111]">设计库</div>
    </div>
    <div className="ml-[5px] flex h-[47px] shrink-0 items-center border-b border-[#c8c8c8]">
      <div className="flex w-[40px] justify-center">
        <Svg size={27}>
          <circle cx="16" cy="16" r="14.500" fill="#f8f8f8" stroke="#444" />
          <path d="M6 16l8-7v4h11v6H14v4z" fill="#4f9bc4" stroke="#23506c" strokeWidth=".7" />
        </Svg>
      </div>
      <div className="flex w-[37px] justify-center">
        <Svg size={27}>
          <circle cx="16" cy="16" r="14.500" fill="#f8f8f8" stroke="#d8d8d8" />
          <path d="M26 16l-8-7v4H7v6h11v4z" fill="#d8d8d8" stroke="#c0c0c0" strokeWidth=".7" />
        </Svg>
      </div>
      <div className="flex w-[16px] justify-center">
        <svg width="12" height="7" viewBox="0 0 12 7"><path d="M0 0h12L6 7z" fill="#111" /></svg>
      </div>
      <div className="flex w-[40px] justify-center">
        <Svg size={32}>
          <g transform="scale(.9)"><Books /></g>
          <path d="M20 19h5v-5h4v5h3v5h-3v5h-4v-5h-5z" fill="#3f9a32" stroke="#256b1c" strokeWidth=".6" />
        </Svg>
      </div>
      <div className="flex w-[40px] justify-center">
        <Svg size={32}>
          <g transform="translate(4 3) scale(.9)"><Books /></g>
          <Sun x={6} y={6} />
        </Svg>
      </div>
      <div className="flex w-[38px] justify-center">
        <Svg size={30}>
          <path d="M5 29V12h10l2 3h10v14z" fill="#e8e8e8" stroke="#555" />
          <path d="M5 29l5-10h21l-5 10z" fill="#f4f4f4" stroke="#555" />
          <Sun x={6} y={6} />
        </Svg>
      </div>
      <div className="flex w-[39px] justify-center">
        <Svg size={30}>
          <path d="M3 14C4 5 14 0 23 5l3-3 3 11-12-1 4-3c-6-3-11-1-13 5z" fill="#2f8fc0" stroke="#1f5c80" strokeWidth=".6" />
          <path d="M29 18c-1 9-11 14-20 9l-3 3-3-11 12 1-4 3c6 3 11 1 13-5z" fill="#2f8fc0" stroke="#1f5c80" strokeWidth=".6" />
        </Svg>
      </div>
      <div className="flex w-[38px] justify-center">
        <Svg size={26}>
          <path d="M16 1l10 12h-6v17h-8V13H6z" fill="#e4e4e4" stroke="#d0d0d0" />
        </Svg>
      </div>
    </div>
    <div className="ml-[17px] flex h-[247px] shrink-0 flex-col pt-[7px]">
      {tree.map((r) => (
        <div key={r.t} className="flex h-[32px] items-center">
          <div className="flex w-[11px] justify-center">
            {r.caret ? (
              <svg width="10" height="15" viewBox="0 0 10 15" fill="none">
                <path d="M2 1.500l6 6-6 6" stroke="#8e8e8e" strokeWidth="2.400" />
              </svg>
            ) : null}
          </div>
          <div className={`ml-[12px] flex h-[32px] items-center pl-[2px] pr-[7px] ${r.on ? "bg-[#c6e0f5]" : ""}`}>
            <div className="flex w-[32px] justify-center">{r.i}</div>
            <span className={`ml-[5px] whitespace-nowrap ${r.c}`}>{r.t}</span>
          </div>
        </div>
      ))}
    </div>
    <div className="ml-[5px] h-[6px] shrink-0 bg-[#9092a4]" />
    <div className="ml-[5px] grid flex-1 grid-cols-[97px_97px_97px] auto-rows-[97px] overflow-hidden">
      {items.map((it) => (
        <div key={it.n[0] + it.n.length} className="flex flex-col items-center text-center">
          <div className="flex h-[44px] shrink-0 items-center justify-center pt-[8px]">{it.i}</div>
          {it.n.map((l) => (
            <div key={l} className="whitespace-nowrap leading-[24px]">
              {l}
            </div>
          ))}
        </div>
      ))}
    </div>
  </div>
);

const MiniToolbar = () => (
  <div className="absolute left-[26px] top-[281px] z-10 grid h-[91px] w-[258px] grid-cols-[repeat(4,41px)_auto] content-center gap-y-[12px] border border-[#a0a0a0] bg-[#f6f6f6] pl-[4px] shadow-[3px_3px_3px_rgba(0,0,0,0.4)]">
    <div className="flex justify-center">
      <Svg>
        <path d="M12 3h14v18H12z" fill="#f0f0f0" stroke="#aaa" />
        <path d="M2 12l14-4 6 3v11L8 27l-6-3z" fill="#3f8fbc" stroke="#23506c" />
        <path d="M2 12l14-4 6 3-14 4z" fill="#a8d4ea" stroke="#23506c" strokeWidth=".6" />
        <Pencil x={14} y={16} />
      </Svg>
    </div>
    <div className="flex justify-center">
      <Svg>
        <path d="M6 4v20M3 20l3 6 3-6z" stroke="#222" strokeWidth="1.800" fill="#222" />
        <path d="M13 4l7-3 7 3v9l-7 3-7-3z" fill="#3f8fbc" stroke="#23506c" />
        <path d="M13 19l7-3 7 3v9l-7 3-7-3z" fill="#f4f4f4" stroke="#c4c4c4" />
      </Svg>
    </div>
    <div className="flex justify-center">
      <Svg>
        <path d="M2 12l11-9v6h15v20h-6V15H13v6z" fill="#333" />
      </Svg>
    </div>
    <div />
    <div />
    <div className="flex justify-center">
      <Svg>
        <path d="M2 16C8 7 24 7 30 16 24 25 8 25 2 16z" fill="#dcdcdc" stroke="#aaa" />
        <circle cx="16" cy="16" r="5" fill="#bbb" />
        <path d="M4 4l24 24" stroke="#333" strokeWidth="1.500" />
      </Svg>
    </div>
    <div className="flex justify-center">
      <Svg>
        <Magnifier><path d="M13 11h10M13 15h10" stroke="#333" strokeWidth="2" /></Magnifier>
      </Svg>
    </div>
    <div className="flex justify-center">
      <Svg>
        <path d="M2 24l14-9 14 9-14 7z" fill="#5fa3c9" stroke="#23506c" strokeWidth=".7" />
        <path d="M16 24V4M12 9l4-7 4 7z" stroke="#222" strokeWidth="2.400" fill="#222" />
      </Svg>
    </div>
    <div className="flex items-center pl-[4px]">
      <Svg size={34}>
        <circle cx="15" cy="15" r="13" fill="#2f5fc0" />
        <path d="M15 2a13 13 0 0 1 13 13L15 17z" fill="#c9302c" />
        <path d="M2.300 18A13 13 0 0 0 22 26L15 17z" fill="#3d9e3d" />
        <Pencil x={15} y={16} />
      </Svg>
    </div>
    <div className="flex items-center pl-[2px]"><Caret /></div>
  </div>
);

type Row = { k: string; l: ReactNode; i?: ReactNode; more?: boolean; sel?: boolean; sepAfter?: boolean };

const rows: Row[] = [
  { k: "a", l: <>关联中编辑 (<u>A</u>)</> },
  { k: "c", l: <>外部参考(<u>C</u>)<span className="text-[#444]">...</span></>, sel: true },
  { k: "pl", l: <>评论</>, more: true },
  { k: "g", l: <>父子关系... (<u>G</u>)</> },
  {
    k: "h",
    l: <>配置特征 (<u>H</u>)</>,
    i: (
      <Svg>
        <path d="M5 3v27M9 3v27" stroke="#444" />
        <path d="M9 3h10l2 4v8H9z" fill="#3f8fbc" stroke="#23506c" />
        <path d="M9 20h4M9 30h4" stroke="#444" />
        <Pencil x={12} y={15} />
      </Svg>
    ),
  },
  {
    k: "j",
    l: <>删除... (<u>J</u>)</>,
    i: (
      <Svg>
        <path d="M4 4c8 8 16 18 24 25M29 3C18 9 10 19 4 29" stroke="#cf3a1e" strokeWidth="3.600" strokeLinecap="round" />
      </Svg>
    ),
  },
  {
    k: "k",
    l: <>添加到收藏 (<u>K</u>)</>,
    i: (
      <Svg>
        <path d="M2 29V4h10l3 3h15v22z" fill="#e4e4e4" stroke="#666" />
        <path d="M16 10l2.500 6h6.500l-5 4 2 7-6-4-6 4 2-7-5-4h6.500z" fill="#3f8fbc" stroke="#23506c" />
      </Svg>
    ),
  },
  { k: "s", l: <>保存选择</>, more: true },
  {
    k: "n",
    l: <>添加到新文件夹 (<u>N</u>)</>,
    i: (
      <Svg>
        <path d="M2 29V4q0-1 1-1h9l3 3h14q1 0 1 1v22z" fill="url(#gBlue)" stroke="#1f5c80" />
        <path d="M2 7h28" stroke="#1f5c80" />
      </Svg>
    ),
  },
  { k: "p", l: <>特征属性... (<u>P</u>)</>, i: <ListIcon /> },
  {
    k: "q",
    l: <>更改透明度 (<u>Q</u>)</>,
    sepAfter: true,
    i: (
      <Svg>
        <path d="M12 5l6-3 5 3v8l7 3v10l-8 4-8-4-5 1V11l3-1z" fill="#f2d27a" stroke="#c9a348" />
        <path d="M12 5l6 3 5-3M18 8v8M14 19l8 4 8-5M22 23v7" stroke="#c9a348" />
        <path d="M1 25c4-5 10-5 14 0-4 5-10 5-14 0z" fill="#fff" stroke="#333" />
        <circle cx="8" cy="25" r="3" fill="#222" />
      </Svg>
    ),
  },
  { k: "fw", l: <>Feature<u>W</u>orks...</>, more: true },
  { k: "v", l: <>转到... (<u>V</u>)</> },
  { k: "w", l: <>生成新文件夹 (<u>W</u>)</> },
  { k: "y", l: <>重命名树项目 (<u>Y</u>)</> },
  { k: "z", l: <>隐藏/显示树项目... (<u>Z</u>)</> },
  { k: "i", l: <>折叠项目 (<u>I</u>)</>, sepAfter: true },
];

const ContextMenu = () => (
  <div className="absolute left-[26px] top-[384px] z-10 h-[696px] w-[258px] border border-[#a0a0a0] bg-[#f6f6f6] shadow-[3px_3px_3px_rgba(0,0,0,0.4)]">
    <div className="flex h-[38px] items-center border-b border-[#cfcfcf] pl-[4px] font-bold text-[#222]">特征 (基体)</div>
    <div className="mt-[-1px]">
      {rows.map((r) => (
        <div key={r.k}>
          <div
            className={`relative flex items-center pl-[52px] ${
              r.sel
                ? "ml-[4px] mr-[7px] h-[36px] border border-[#a8a8a8] bg-white pl-[47px] text-[#999]"
                : "h-[36px]"
            }`}
          >
            {r.i ? <div className="absolute left-[6px] flex w-[32px] justify-center">{r.i}</div> : null}
            <span className="whitespace-nowrap">{r.l}</span>
            {r.more ? (
              <svg width="5" height="9" viewBox="0 0 5 9" className="absolute right-[19px]">
                <path d="M0 0l5 4.500L0 9z" fill="#777" />
              </svg>
            ) : null}
          </div>
          {r.sepAfter ? <div className="ml-[46px] h-px bg-[#cfcfcf]" /> : null}
        </div>
      ))}
    </div>
    <div className="flex justify-center pt-[11px]">
      <svg width="9" height="12" viewBox="0 0 9 12" fill="none">
        <path d="M1 1l3.500 3.500L8 1M1 6.500L4.500 10 8 6.500" stroke="#333" strokeWidth="1.500" />
      </svg>
    </div>
  </div>
);

const Pointer = () => (
  <>
    <div className="pointer-events-none absolute left-[81px] top-[425px] z-20 h-[96px] w-[96px] rounded-full bg-[#ffff00]/75" />
    <svg width="20" height="28" viewBox="0 0 20 28" className="absolute left-[129px] top-[472px] z-30">
      <path d="M1 1v21l5-5 4 9 4-2-4-8h7z" fill="#fff" stroke="#555" strokeWidth="1" />
    </svg>
  </>
);

export default function App() {
  return (
    <div className="relative flex h-[1080px] w-[1728px] flex-col overflow-hidden border-t border-[#8a8a8a] bg-[#f6f6f6] font-['Noto_Sans','Noto_Sans_CJK_SC',sans-serif] text-[18px] text-[#333]">
      <svg className="absolute h-0 w-0">
        <defs>
          <linearGradient id="gBlue" x1="0" y1="0" x2="0" y2="1">
            <stop offset="0" stopColor="#a8d4ea" />
            <stop offset="1" stopColor="#2b7aa8" />
          </linearGradient>
          <linearGradient id="gGray" x1="0" y1="0" x2="1" y2="1">
            <stop offset="0" stopColor="#ffffff" />
            <stop offset="1" stopColor="#c6c6c6" />
          </linearGradient>
        </defs>
      </svg>
      <TitleBar />
      <Ribbon />
      <div className="flex min-h-0 flex-1">
        <div className="flex w-[1421px] shrink-0 flex-col">
          <TabsRow />
          <div className="flex min-h-0 flex-1">
            <LeftPanel />
            <Viewport />
          </div>
          <div className="flex h-[25px] shrink-0 items-stretch border-y border-[#7d7d7d] bg-[#f6f6f6] pr-[3px]">
            <div className="w-[3px] bg-[#555]" />
            <div className="w-[17px]" />
            <div className="w-[263px] leading-[23px]">模型</div>
            <div className="w-[7px] border-r border-[#777] bg-[#cfcfcf]" />
          </div>
        </div>
        <RightPanel />
      </div>
      <div className="flex h-[27px] shrink-0 items-center border-t border-[#9a9a9a] bg-[#f6f6f6]">
        <span className="ml-[2px] leading-none">...</span>
        <span className="ml-[1444px] whitespace-nowrap">在编辑 零件</span>
        <span className="ml-[125px] whitespace-nowrap">自定义</span>
      </div>
      <div className="h-[2px] shrink-0 bg-[#1e2a32]" />
      <MiniToolbar />
      <ContextMenu />
      <Pointer />
    </div>
  );
}
